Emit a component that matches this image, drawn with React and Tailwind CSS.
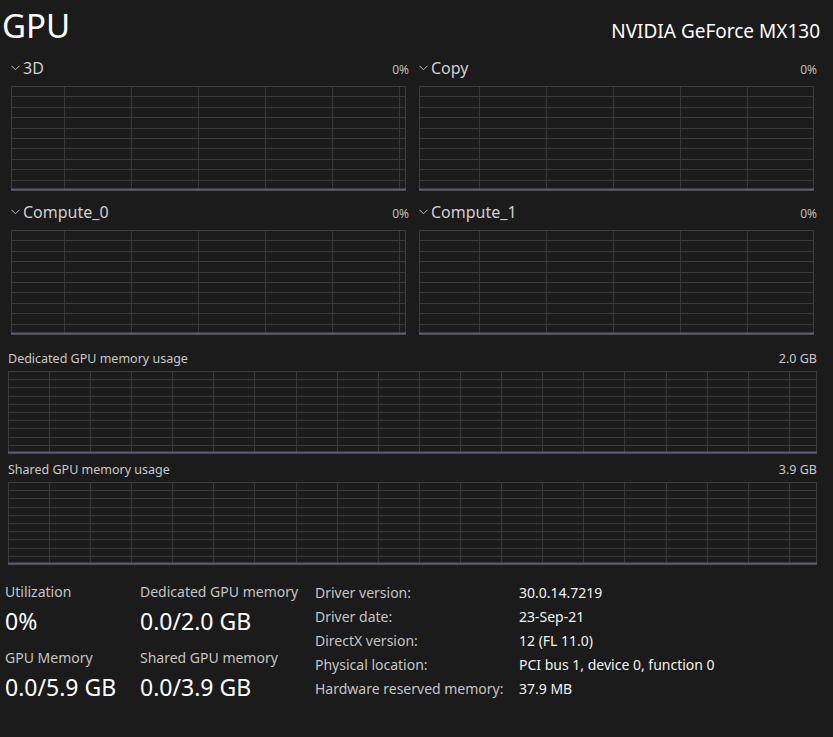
import React from "react";

const FONT = { fontFamily: '"Segoe UI", "Noto Sans", "Open Sans", sans-serif' };

function Chevron() {
  return (
    <svg width="9" height="6" viewBox="0 0 9 6" className="shrink-0">
      <path d="M0.5 0.8 L4.5 4.8 L8.5 0.8" fill="none" stroke="#bdbdbd" strokeWidth="1" />
    </svg>
  );
}

function Graph({ width, height, rows, colStep, colOffset }) {
  const lines = [];
  for (let i = 1; i < rows; i++) {
    const y = Math.round((height - 1) * (i / rows)) + 0.5;
    lines.push(<line key={"h" + i} x1="0" x2={width} y1={y} y2={y} stroke="#383838" strokeWidth="1" />);
  }
  for (let x = colOffset; x < width - 2; x += colStep) {
    const xx = Math.round(x) + 0.5;
    lines.push(<line key={"v" + x} x1={xx} x2={xx} y1="0" y2={height} stroke="#383838" strokeWidth="1" />);
  }
  return (
    <svg width={width} height={height} className="block">
      <rect x="0" y="0" width={width} height={height} fill="#1b1b1b" />
      {lines}
      <rect x="0.5" y="0.5" width={width - 1} height={height - 1} fill="none" stroke="#3d3d3d" strokeWidth="1" />
      <line x1="0" x2={width} y1={height - 1.5} y2={height - 1.5} stroke="#5e5a78" strokeWidth="2" />
    </svg>
  );
}

function EnginePane({ name, offset }) {
  return (
    <div className="w-[401px]">
      <div className="h-[24px] flex items-center pl-[3px] pr-0">
        <Chevron />
        <span className="ml-[3px] text-[16px] text-[#cfcfcf] leading-none">{name}</span>
        <span className="ml-auto pt-[3px] text-[12px] text-[#bdbdbd] leading-none">0%</span>
      </div>
      <div className="mt-[6px] ml-[3px]">
        <Graph width={395} height={105} rows={10} colStep={67} colOffset={offset} />
      </div>
    </div>
  );
}

function MemGraph({ label, value }) {
  return (
    <div>
      <div className="h-[20px] flex items-center text-[12.5px] text-[#c8c8c8] leading-none">
        <span>{label}</span>
        <span className="ml-auto">{value}</span>
      </div>
      <div className="mt-[2px]">
        <Graph width={809} height={83} rows={10} colStep={41.1} colOffset={41} />
      </div>
    </div>
  );
}

function Stat({ label, value, className = "" }) {
  return (
    <div className={className}>
      <div className="h-[20px] flex items-center text-[14px] text-[#c4c4c4] leading-none">{label}</div>
      <div className="h-[30px] mt-[4px] flex items-center text-[23px] text-white leading-none">{value}</div>
    </div>
  );
}

export default function App() {
  const info = [
    ["Driver version:", "30.0.14.7219"],
    ["Driver date:", "23-Sep-21"],
    ["DirectX version:", "12 (FL 11.0)"],
    ["Physical location:", "PCI bus 1, device 0, function 0"],
    ["Hardware reserved memory:", "37.9 MB"],
  ];
  return (
    <div style={FONT} className="w-[833px] h-[737px] bg-[#1b1b1b] overflow-hidden">
      <div className="h-[56px] flex items-start justify-between pr-[13px]">
        <div className="pl-[2px] pt-[5px] text-[33px] text-white leading-[42px]">GPU</div>
        <div className="pt-[18px] text-[19px] text-white leading-[26px]">NVIDIA GeForce MX130</div>
      </div>
      <div className="pl-[8px] w-[817px]">
        <div className="flex gap-[7px]">
          <EnginePane name="3D" offset={53} />
          <EnginePane name="Copy" offset={60} />
        </div>
        <div className="flex gap-[7px] mt-[9px]">
          <EnginePane name="Compute_0" offset={53} />
          <EnginePane name="Compute_1" offset={60} />
        </div>
        <div className="mt-[14px]">
          <MemGraph label="Dedicated GPU memory usage" value="2.0 GB" />
        </div>
        <div className="mt-[6px]">
          <MemGraph label="Shared GPU memory usage" value="3.9 GB" />
        </div>
      </div>
      <div className="flex mt-[17px] pl-[5px]">
        <div className="w-[135px]">
          <Stat label="Utilization" value="0%" />
          <Stat label="GPU Memory" value="0.0/5.9 GB" className="mt-[12px]" />
        </div>
        <div className="w-[175px]">
          <Stat label="Dedicated GPU memory" value="0.0/2.0 GB" />
          <Stat label="Shared GPU memory" value="0.0/3.9 GB" className="mt-[12px]" />
        </div>
        <div className="grid grid-cols-[204px_auto] auto-rows-[24px] text-[14px] leading-none -mt-[1px]">
          {info.map(([k, v]) => (
            <React.Fragment key={k}>
              <div className="flex items-center text-[#c4c4c4]">{k}</div>
              <div className="flex items-center text-[#f2f2f2]">{v}</div>
            </React.Fragment>
          ))}
        </div>
      </div>
    </div>
  );
}
